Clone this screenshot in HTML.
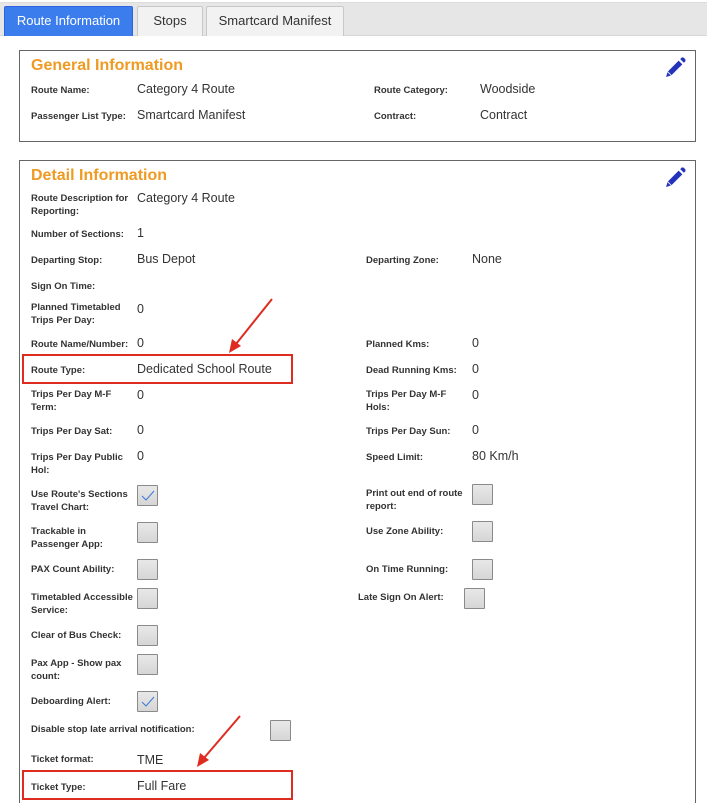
<!DOCTYPE html>
<html><head><meta charset="utf-8"><style>
*{margin:0;padding:0;box-sizing:border-box}
html,body{width:707px;height:803px;overflow:hidden}
body{background:#fff;font-family:"Liberation Sans",Arial,sans-serif;position:relative;color:#222}
.a{position:absolute;white-space:nowrap}
.bar{position:absolute;left:0;top:2px;width:707px;height:34px;background:#e6e6e6;border-top:1px solid #ddd;border-bottom:1px solid #d8d8d8}
.tab{position:absolute;top:6px;height:30px;border:1px solid #c8c8c8;border-bottom:none;background:#f2f2f2;font-size:13px;line-height:28px;text-align:center;color:#333;border-radius:2px 2px 0 0}
.box{position:absolute;left:19px;width:677px;border:1.5px solid #666;background:#fff}
.t{position:absolute;left:31px;font-size:16px;font-weight:bold;color:#ef9a22;white-space:nowrap;margin-top:1px}
.l{position:absolute;font-size:9.5px;font-weight:bold;line-height:13.5px;color:#333;white-space:nowrap;margin-top:1.5px}
.v{position:absolute;font-size:12.5px;line-height:16px;color:#333;white-space:nowrap;margin-top:1px}
.cb{position:absolute;width:21px;height:21px;border:1px solid #8a8a8a;background:linear-gradient(#e8e8e8,#d6d6d6);border-radius:1px}
.red{position:absolute;border:2px solid #de2c20}
</style></head><body>
<div class="bar"></div>
<div class="tab" style="left:4px;width:129px;background:#3b7ded;border-color:#2f62e0;color:#fff">Route Information</div>
<div class="tab" style="left:137px;width:66px">Stops</div>
<div class="tab" style="left:206px;width:138px">Smartcard Manifest</div>

<div class="box" style="top:50px;height:92px"></div>
<div class="t" style="top:56px">General Information</div>
<svg class="a" style="left:665px;top:57px" width="21" height="21" viewBox="0 0 20 20"><path d="M1 19 L2.5 14 L13 3.5 L16.5 7 L6 17.5 Z" fill="#2433bb"/><path d="M14.5 2 L16 0.5 Q17 0 18 0.8 L19.2 2 Q20 3 19.4 4 L18 5.5 Z" fill="#2433bb"/><path d="M2.5 14 L6 17.5" stroke="#fff" stroke-width="0.8"/></svg>
<div class="l" style="left:31px;top:82px">Route Name:</div><div class="v" style="left:137px;top:80px">Category 4 Route</div>
<div class="l" style="left:374px;top:82px">Route Category:</div><div class="v" style="left:480px;top:80px">Woodside</div>
<div class="l" style="left:31px;top:108px">Passenger List Type:</div><div class="v" style="left:137px;top:106px">Smartcard Manifest</div>
<div class="l" style="left:374px;top:108px">Contract:</div><div class="v" style="left:480px;top:106px">Contract</div>

<div class="box" style="top:160px;height:660px"></div>
<div class="t" style="top:166px">Detail Information</div>
<svg class="a" style="left:665px;top:167px" width="21" height="21" viewBox="0 0 20 20"><path d="M1 19 L2.5 14 L13 3.5 L16.5 7 L6 17.5 Z" fill="#2433bb"/><path d="M14.5 2 L16 0.5 Q17 0 18 0.8 L19.2 2 Q20 3 19.4 4 L18 5.5 Z" fill="#2433bb"/><path d="M2.5 14 L6 17.5" stroke="#fff" stroke-width="0.8"/></svg>

<div class="l" style="left:31px;top:190px">Route Description for<br>Reporting:</div><div class="v" style="left:137px;top:189px">Category 4 Route</div>
<div class="l" style="left:31px;top:226px">Number of Sections:</div><div class="v" style="left:137px;top:224px">1</div>
<div class="l" style="left:31px;top:252px">Departing Stop:</div><div class="v" style="left:137px;top:250px">Bus Depot</div>
<div class="l" style="left:366px;top:252px">Departing Zone:</div><div class="v" style="left:472px;top:250px">None</div>
<div class="l" style="left:31px;top:278px">Sign On Time:</div>
<div class="l" style="left:31px;top:299px">Planned Timetabled<br>Trips Per Day:</div><div class="v" style="left:137px;top:300px">0</div>
<div class="l" style="left:31px;top:336px">Route Name/Number:</div><div class="v" style="left:137px;top:334px">0</div>
<div class="l" style="left:366px;top:336px">Planned Kms:</div><div class="v" style="left:472px;top:334px">0</div>
<div class="red" style="left:22px;top:354px;width:271px;height:30px"></div>
<div class="l" style="left:31px;top:362px">Route Type:</div><div class="v" style="left:137px;top:360px">Dedicated School Route</div>
<div class="l" style="left:366px;top:362px">Dead Running Kms:</div><div class="v" style="left:472px;top:360px">0</div>
<div class="l" style="left:31px;top:386px">Trips Per Day M-F<br>Term:</div><div class="v" style="left:137px;top:386px">0</div>
<div class="l" style="left:366px;top:386px">Trips Per Day M-F<br>Hols:</div><div class="v" style="left:472px;top:386px">0</div>
<div class="l" style="left:31px;top:423px">Trips Per Day Sat:</div><div class="v" style="left:137px;top:421px">0</div>
<div class="l" style="left:366px;top:423px">Trips Per Day Sun:</div><div class="v" style="left:472px;top:421px">0</div>
<div class="l" style="left:31px;top:449px">Trips Per Day Public<br>Hol:</div><div class="v" style="left:137px;top:447px">0</div>
<div class="l" style="left:366px;top:449px">Speed Limit:</div><div class="v" style="left:472px;top:447px">80 Km/h</div>

<div class="l" style="left:31px;top:486px">Use Route's Sections<br>Travel Chart:</div>
<div class="cb" style="left:137px;top:485px"><svg width="19" height="19"><path d="M4 10 L8 14 L16 5" fill="none" stroke="#3a78d8" stroke-width="1"/></svg></div>
<div class="l" style="left:366px;top:485px">Print out end of route<br>report:</div><div class="cb" style="left:472px;top:484px"></div>
<div class="l" style="left:31px;top:523px">Trackable in<br>Passenger App:</div><div class="cb" style="left:137px;top:522px"></div>
<div class="l" style="left:366px;top:523px">Use Zone Ability:</div><div class="cb" style="left:472px;top:521px"></div>
<div class="l" style="left:31px;top:561px">PAX Count Ability:</div><div class="cb" style="left:137px;top:559px"></div>
<div class="l" style="left:366px;top:561px">On Time Running:</div><div class="cb" style="left:472px;top:559px"></div>
<div class="l" style="left:31px;top:589px">Timetabled Accessible<br>Service:</div><div class="cb" style="left:137px;top:588px"></div>
<div class="l" style="left:358px;top:589px">Late Sign On Alert:</div><div class="cb" style="left:464px;top:588px"></div>
<div class="l" style="left:31px;top:627px">Clear of Bus Check:</div><div class="cb" style="left:137px;top:625px"></div>
<div class="l" style="left:31px;top:655px">Pax App - Show pax<br>count:</div><div class="cb" style="left:137px;top:654px"></div>
<div class="l" style="left:31px;top:693px">Deboarding Alert:</div>
<div class="cb" style="left:137px;top:691px"><svg width="19" height="19"><path d="M4 10 L8 14 L16 5" fill="none" stroke="#3a78d8" stroke-width="1"/></svg></div>
<div class="l" style="left:31px;top:721px">Disable stop late arrival notification:</div><div class="cb" style="left:270px;top:720px"></div>
<div class="l" style="left:31px;top:751px">Ticket format:</div><div class="v" style="left:137px;top:751px">TME</div>
<div class="red" style="left:22px;top:770px;width:271px;height:30px"></div>
<div class="l" style="left:31px;top:779px">Ticket Type:</div><div class="v" style="left:137px;top:777px">Full Fare</div>

<svg class="a" style="left:0;top:0" width="707" height="803">
<g stroke="#de2c20" stroke-width="2" fill="#de2c20">
<line x1="272" y1="299" x2="236" y2="344"/><path d="M229 353 L232 339 L241 346 Z" stroke="none"/>
<line x1="240" y1="716" x2="204" y2="758"/><path d="M197 767 L200 753 L209 760 Z" stroke="none"/>
</g></svg>
</body></html>
